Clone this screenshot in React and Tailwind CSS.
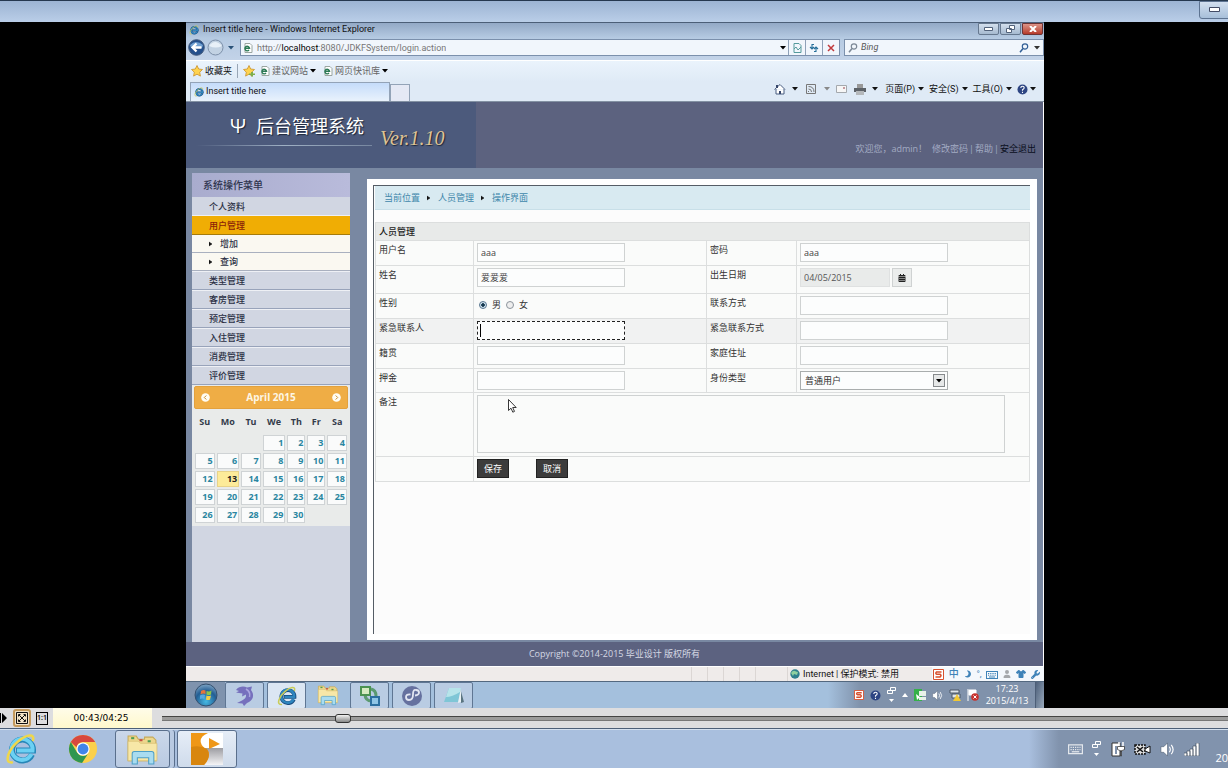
import { FaCalendarAlt } from "react-icons/fa";
import { FaShirt, FaWrench, FaMoon, FaUser } from "react-icons/fa6";

const menu = ["类型管理", "客房管理", "预定管理", "入住管理", "消费管理", "评价管理"];
const weekDays = ["Su", "Mo", "Tu", "We", "Th", "Fr", "Sa"];
const weeks = [
  ["", "", "", 1, 2, 3, 4],
  [5, 6, 7, 8, 9, 10, 11],
  [12, 13, 14, 15, 16, 17, 18],
  [19, 20, 21, 22, 23, 24, 25],
  [26, 27, 28, 29, 30, "", ""],
];

const chromeFont = "font-['Roboto','Noto_Sans_CJK_SC',sans-serif]";
const field = "block h-[19px] border border-[#cfd2d2] bg-[#fcfdfd] px-[3px] text-[9px] text-[#444] outline-none";
const labelCell = "border border-[#dcdede] px-[3px] pt-[3px] align-top text-[9px] leading-[12px] text-[#333]";
const fieldCell = "border border-[#dcdede] px-[3px] py-[2px] align-top";

const Caret = ({ className = "text-black" }) => (
  <svg className={`shrink-0 ${className}`} width="6" height="4" viewBox="0 0 6 4" fill="currentColor">
    <path d="M0 0h6L3 3.5z" />
  </svg>
);

const Triangle = () => (
  <svg width="4" height="6" viewBox="0 0 4 6" className="shrink-0" fill="#111">
    <path d="M0 1l3 2-3 2z" stroke="#111" strokeWidth=".5" />
  </svg>
);

const IeIcon = ({ size = 12, light = false }) => (
  <svg width={size} height={size} viewBox="0 0 32 32" fill="none" className="shrink-0">
    <path
      d="M27 21.500A10.500 10.500 0 1 1 28 17.500H11"
      stroke={light ? "#2787b8" : "#174a7e"}
      strokeWidth="6"
    />
    <path
      d="M26.500 21A10.500 10.500 0 1 1 27.500 17.500H12"
      stroke={light ? "#6bd0f3" : "#2f86bf"}
      strokeWidth="4"
    />
    <path
      d="M7 29.500C-2 30 4 16 13 8.500C21 1.500 30 0 28 7"
      stroke={light ? "#eed74c" : "#c9cc58"}
      strokeWidth="2.500"
      strokeLinecap="round"
    />
  </svg>
);

const PageIcon = () => (
  <svg width="10" height="10" viewBox="0 0 10 10" fill="none" className="shrink-0">
    <path d="M2 .5h5l2 2v7H2z" fill="#fff" stroke="#9aa5a0" />
    <path d="M6 7A2.300 2.300 0 1 1 6.500 5.200H1.500" stroke="#2c7a55" strokeWidth="1.400" />
  </svg>
);

const Star = ({ plus }) => (
  <svg width="12" height="12" viewBox="0 0 12 12" className="shrink-0">
    <path d="M6 .5l1.700 3.500 3.800.5-2.800 2.700.7 3.900L6 9.200l-3.400 1.900.7-3.900L.5 4.500 4.300 4z" fill="#ffd34f" stroke="#c9902a" strokeWidth=".8" />
    {plus && <path d="M6 8.500h2V7h2v1.500h2v1.500h-2v1.500H8V10H6z" fill="#7fae4a" />}
  </svg>
);

const Search = ({ color }) => (
  <svg width="10" height="10" viewBox="0 0 10 10" fill="none" className="shrink-0">
    <circle cx="6" cy="3.500" r="2.700" stroke={color} strokeWidth="1.200" />
    <path d="M4 5.500L1 9.300" stroke={color} strokeWidth="1.500" />
  </svg>
);

const Folder = ({ size }) => (
  <svg width={size} height={size} viewBox="0 0 32 32" className="shrink-0">
    <path d="M2 3h8l2 3h6V4h8l3 3v20H2z" fill="#edd78c" stroke="#c7aa58" />
    <path d="M2 8h10l2 2h16v17H2z" fill="#f7e7a7" stroke="#d3ba6c" strokeWidth=".6" />
    <path d="M5 4h3v2H5z" fill="#4f9d52" />
    <path d="M13 6h3v2h-3z" fill="#c95040" />
    <path d="M21 7h3v2h-3z" fill="#4f9d52" />
    <path d="M6 30V20q0-2 2-2h17q2 0 2 2v10h-5v-6H11v6z" fill="#a9dcf0" stroke="#4d9fc7" />
  </svg>
);

const StartOrb = () => (
  <svg width="24" height="24" viewBox="0 0 24 24">
    <defs>
      <radialGradient id="orb" cx=".5" cy=".8" r=".8">
        <stop offset="0" stopColor="#45b9e3" />
        <stop offset=".6" stopColor="#235d93" />
        <stop offset="1" stopColor="#7fa5c5" />
      </radialGradient>
    </defs>
    <circle cx="12" cy="12" r="11" fill="url(#orb)" stroke="#35506f" />
    <path d="M7 8q2.500-1.500 4.500-.5V11Q9 10 6.500 11.500z" fill="#e8743b" />
    <path d="M12.500 8q2.500 1 5-.5l-.5 4q-2.500 1-4.500 0z" fill="#8ec549" />
    <path d="M6 12.500q2.500-1.500 5-.5l-.5 4q-2.500-1-4.500 0z" fill="#59a8e0" />
    <path d="M12.500 12.500q2 1 4.500 0l-1 4q-2 1-4 0z" fill="#f6cd45" />
  </svg>
);

const Dolphin = () => (
  <svg width="22" height="22" viewBox="0 0 22 22" fill="#7670bd">
    <path d="M2 5C5 1 10 1 13 2.500L18 1.500 17 5C21 10 19 16 13 18L10 21 8.500 18.500 3 18 8 15.500C11 14 12.500 12 12 9.500L8 11.500 8.500 8.500C6 8.500 4 7.500 2 7.500L5 6z" />
    <path d="M12 4q5 3 3.500 8" fill="none" stroke="#aaa6df" strokeWidth="1.500" />
  </svg>
);

const Network = () => (
  <svg width="22" height="22" viewBox="0 0 22 22" fill="none">
    <path d="M6 9q0 7 7 7M12 4q5 1 5 7" stroke="#5b9a70" strokeWidth="3" />
    <path d="M2 2h9v8H2z" fill="#d5eac0" stroke="#4b9251" strokeWidth="2" />
    <path d="M12 12h8v8h-8z" fill="#8fc5e6" stroke="#2c6fa0" strokeWidth="2" />
  </svg>
);

const Infinity = () => (
  <svg width="22" height="22" viewBox="0 0 22 22" fill="none">
    <circle cx="11" cy="11" r="10" fill="#66719f" />
    <path d="M9.500 9.500Q5 9 5 12t3 3q4 0 4-5.500T15 5q3 0 3 2.500t-4 3" stroke="#e3e6f2" strokeWidth="1.800" />
  </svg>
);

const Notebook = () => (
  <svg width="22" height="22" viewBox="0 0 22 22">
    <path d="M17 3l4 14-3 1z" fill="#5a7480" />
    <path d="M6 3h12l-3 14H1z" fill="#7fc6d6" />
    <path d="M6 3h12l-1 4q-8 5-14 5z" fill="#b7e4ea" />
    <path d="M18 3v14l-3 1z" fill="#e9f2f4" />
  </svg>
);

const Chrome = () => (
  <svg width="30" height="30" viewBox="0 0 32 32">
    <circle cx="16" cy="16" r="15" fill="#fbd04b" />
    <path d="M3 8.500A15 15 0 0 1 29 8.500H16A7.500 7.500 0 0 0 9 14z" fill="#d8483e" />
    <path d="M3 8.500A15 15 0 0 0 15 31l6-9.500A7.500 7.500 0 0 1 9.500 19.500z" fill="#2f9650" />
    <circle cx="16" cy="16" r="7" fill="#fff" />
    <circle cx="16" cy="16" r="5.800" fill="#4285e8" />
  </svg>
);

const PlayerLogo = () => (
  <svg width="32" height="32" viewBox="0 0 32 32">
    <defs>
      <linearGradient id="silver" x2="0" y2="1">
        <stop offset="0" stopColor="#9d9da2" />
        <stop offset="1" stopColor="#f4f4f6" />
      </linearGradient>
    </defs>
    <path d="M0 0h32v32H0z" fill="#fff" />
    <path d="M12 15h20v17H12z" fill="url(#silver)" />
    <path d="M0 0h17Q8 4 10 10q1 4 6 6 5 7-3 16H0z" fill="#ef9717" />
    <path d="M0 14q9-2 16 2 5 7-3 16H0z" fill="#d8860f" />
    <path d="M18 5l11 6-11 5z" fill="#ef9717" />
  </svg>
);

const Speaker = ({ size = 12 }) => (
  <svg width={size} height={size} viewBox="0 0 16 16" fill="none" className="shrink-0">
    <path d="M1 5h3l4-4v14l-4-4H1z" fill="#fff" stroke="#4d5c70" strokeWidth=".6" />
    <path d="M10 5q2 3 0 6M12 3q4 5 0 10" stroke="#fff" strokeWidth="1.200" />
  </svg>
);

const Restore = () => (
  <svg width="9" height="16" viewBox="0 0 9 16" fill="none" className="shrink-0">
    <path d="M3.500.500h5v3h-5zM.5 3.500h5v3h-5z" stroke="#fff" fill="#8496ad" />
    <path d="M2 12h5l-2.500 3z" fill="#fff" />
  </svg>
);

const Keyboard = ({ color, width = 12 }) => (
  <svg width={width} height={width * 3 / 4} viewBox="0 0 12 9" fill="none" className="shrink-0">
    <rect x=".5" y="1.500" width="11" height="7" stroke={color} />
    <path d="M2 3.500h8M2 5.200h8" stroke={color} strokeDasharray="1 .8" />
    <path d="M3 7h6" stroke={color} />
  </svg>
);

const SogouIcon = ({ size = 11 }) => (
  <svg width={size} height={size} viewBox="0 0 11 11" fill="none" className="shrink-0">
    <path d="M.5.500h10v10H.5z" fill="#fff" stroke="#d8512f" />
    <path d="M8.500 3H3.500Q2 4.500 4 5.300h3Q9 6.500 7 8H2.500" stroke="#d8512f" strokeWidth="1.600" />
  </svg>
);

const HelpIcon = () => (
  <svg width="11" height="11" viewBox="0 0 11 11" fill="none" className="shrink-0">
    <circle cx="5.500" cy="5.500" r="5" fill="#2d4583" />
    <path d="M3.800 4q0-1.700 1.700-1.700t1.700 1.500q0 1-1.700 2v1M5.500 7.800v1.200" stroke="#fff" strokeWidth="1.100" />
  </svg>
);

const WindowButton = ({ label, close, children }) => (
  <button
    aria-label={label}
    className={`flex h-[12px] w-[21px] items-center justify-center rounded-b-[2px] border ${
      close ? "border-[#6f3434] bg-linear-to-b from-[#dc9488] to-[#b5392a]" : "border-[#66788f] bg-linear-to-b from-[#d3dfed] to-[#a6bad0]"
    }`}
  >
    {children}
  </button>
);

const TitleBar = () => (
  <div className={`flex h-[16px] items-start justify-between border-t border-[#4c5f78] bg-linear-to-b from-[#93a9c6] to-[#b5cae2] pr-px pl-[3px] ${chromeFont}`}>
    <h1 className="flex items-center gap-[4px] text-[9px] leading-[13px] text-[#111]">
      <IeIcon size={10} />
      Insert title here - Windows Internet Explorer
    </h1>
    <div className="flex gap-px">
      <WindowButton label="最小化">
        <svg width="9" height="5"><path d="M.5.500h8v3h-8z" fill="#fff" stroke="#52627a" /></svg>
      </WindowButton>
      <WindowButton label="还原">
        <svg width="9" height="8"><path d="M3.500.500h5v4h-5zM.5 3.500h5v4h-5z" fill="#fff" stroke="#52627a" /></svg>
      </WindowButton>
      <WindowButton label="关闭" close>
        <svg width="8" height="6"><path d="M1 0l6 6M7 0L1 6" stroke="#fff" strokeWidth="2" /></svg>
      </WindowButton>
    </div>
  </div>
);

const AddressBar = () => (
  <div className={`flex h-[22px] items-center bg-linear-to-b from-[#b5cae2] to-[#c3d3e8] pb-[3px] pl-[2px] ${chromeFont}`}>
    <button aria-label="后退">
      <svg width="17" height="17" viewBox="0 0 17 17" fill="none">
        <circle cx="8.500" cy="8.500" r="7.800" fill="#24508c" stroke="#42597c" />
        <path d="M2 6q6-6 13 0l-1 3H3z" fill="#6f9fd0" />
        <path d="M13.500 8.500H5M8.500 4.500l-4 4 4 4" stroke="#fff" strokeWidth="2.300" />
      </svg>
    </button>
    <button aria-label="前进" className="ml-[2px]">
      <svg width="17" height="17" viewBox="0 0 17 17">
        <circle cx="8.500" cy="8.500" r="7.500" fill="#c2d2e3" stroke="#7d90a9" />
        <path d="M2 7q6-8 13 0-6 3-13 0z" fill="#e8f0f8" />
      </svg>
    </button>
    <Caret className="mr-[6px] ml-[4px] text-[#2a5278]" />
    <div className="flex h-[17px] min-w-0 flex-1 items-center border border-[#7b90ac] bg-[#f1f6fc]">
      <div className="flex min-w-0 flex-1 items-center gap-[4px] px-[2px]">
        <PageIcon />
        <span className="truncate text-[9px] leading-[14px] text-[#777]">
          http://<span className="text-black">localhost</span>:8080/JDKFSystem/login.action
        </span>
        <Caret className="ml-auto text-black" />
      </div>
      <button aria-label="兼容性视图" className="flex h-full w-[17px] items-center justify-center border-l border-[#8fa1b8]">
        <svg width="9" height="10" fill="none"><path d="M1 .5h5l2 2v7H1zM1 6l2-2 2 3 3-3" stroke="#559a9c" /></svg>
      </button>
      <button aria-label="刷新" className="flex h-full w-[17px] items-center justify-center border-l border-[#8fa1b8]">
        <svg width="10" height="10" fill="none"><path d="M5 1.500H3V6M1 4l2 2 2-2M5 8.500h2V4M5 6l2-2 2 2" stroke="#256f9a" strokeWidth="1.100" /></svg>
      </button>
      <button aria-label="停止" className="flex h-full w-[17px] items-center justify-center border-l border-[#8fa1b8]">
        <svg width="8" height="8"><path d="M1 1l6 6M7 1L1 7" stroke="#c0393b" strokeWidth="1.500" /></svg>
      </button>
    </div>
    <label className="ml-[4px] flex h-[17px] w-[200px] items-center border border-[#7b90ac] bg-[#f1f6fc] px-[3px]">
      <Search color="#7c8896" />
      <input aria-label="搜索" placeholder="Bing" className="ml-[3px] min-w-0 flex-1 text-[9px] italic outline-none placeholder:text-[#555]" />
      <Search color="#315f96" />
      <Caret className="ml-[5px] text-[#333]" />
    </label>
  </div>
);

const FavoritesBar = () => (
  <nav className="flex h-[22px] items-center border-t border-white bg-linear-to-b from-[#eaf3fc] to-[#dfeaf6] pb-[2px] pl-[5px] text-[9px] text-[#666]">
    <Star />
    <a href="#fav" className="ml-[2px] text-[#111]">收藏夹</a>
    <span className="mx-[5px] h-[14px] w-px bg-[#98a6b6]"></span>
    <Star plus />
    <a href="#sites" className="ml-[5px] flex items-center gap-[2px]"><PageIcon />建议网站<Caret /></a>
    <a href="#slices" className="ml-[7px] flex items-center gap-[2px]"><PageIcon />网页快讯库<Caret /></a>
  </nav>
);

const TabRow = () => (
  <div className={`flex h-[20px] items-end border-b border-[#8391a3] bg-[#dfeaf6] pl-[4px] text-[9px] text-[#111] ${chromeFont}`}>
    <div className="flex h-[19px] w-[200px] items-center gap-[2px] border border-b-0 border-[#93a3b7] bg-linear-to-b from-[#c5dcfa] to-[#e9f2fc] px-[3px]">
      <IeIcon size={10} />
      Insert title here
    </div>
    <button aria-label="新选项卡" className="h-[17px] w-[20px] border border-b-0 border-[#93a3b7] bg-[#e5e9f5]"></button>
    <div className="mb-[6px] ml-auto flex items-center pr-[8px] leading-[12px]">
      <svg width="12" height="12" fill="none"><path d="M2 6v5h8V6M.5 6.500L6 1.500l5 5" fill="#fff" stroke="#485c80" /><path d="M5 8h2v3H5zM2 2h2v3H2z" fill="#36466b" /></svg>
      <Caret className="ml-[6px]" />
      <svg width="10" height="10" fill="none" className="ml-[8px]"><path d="M.5.500h9v9h-9z" stroke="#777" /><path d="M2.500 8V7M2.500 5q3 0 3 3M2.500 2.500q5.500 0 5.500 5.500" stroke="#777" /></svg>
      <Caret className="ml-[8px] text-[#888]" />
      <svg width="11" height="9" fill="none" className="ml-[6px]"><path d="M.5.500h10v7H.5z" fill="#f6f6f6" stroke="#a4a8ad" /><path d="M7 2h2v2H7z" fill="#c69aa0" /></svg>
      <svg width="12" height="11" className="ml-[7px]"><path d="M3 0h6v4H3z" fill="#999" /><path d="M0 4h12v4H0z" fill="#5d6268" /><path d="M2 7h8v4H2z" fill="#b5b8bb" /></svg>
      <Caret className="mr-[7px] ml-[6px]" />
      <span>页面(P)</span><Caret className="mr-[5px] ml-[3px]" />
      <span>安全(S)</span><Caret className="mr-[5px] ml-[3px]" />
      <span>工具(O)</span><Caret className="mr-[5px] ml-[3px]" />
      <HelpIcon />
      <Caret className="ml-[2px]" />
    </div>
  </div>
);

const Header = () => (
  <header className="flex h-[66px] bg-[#5c627f]">
    <div className="w-[290px] bg-[#4c5a7c] pl-[10px]">
      <div className="flex items-end">
        <div className="w-[176px] pl-[34px]">
          <div className="flex h-[43px] items-center gap-[10px] pt-[5px] text-[18px] leading-[24px] whitespace-nowrap text-white text-shadow-[1px_1px_1px_#1d2638]">
            <span className="text-[20px]">Ψ</span>
            后台管理系统
          </div>
        </div>
        <span className="pl-[8px] font-['Liberation_Serif',serif] text-[20px] leading-[14px] text-[#dfc394] italic text-shadow-[1px_1px_1px_#1d2638]">Ver.1.10</span>
      </div>
      <div className="h-px w-[176px] bg-linear-to-r from-transparent via-[#9fb0c4] to-[#7787a0]"></div>
    </div>
    <div className="ml-auto flex items-start gap-px pt-[40px] pr-[7px] text-[9px] leading-[14px] text-[#a3abc3]">
      <span className="mr-[4px]">欢迎您，admin！</span>
      <a href="#password">修改密码</a>|<a href="#help">帮助</a>|
      <a href="#logout" className="text-[#0a0e1c]">安全退出</a>
    </div>
  </header>
);

const Calendar = () => (
  <div className="bg-[#e9ebea] px-[2px] pt-px pb-[2px]">
    <div className="flex h-[23px] items-center justify-between rounded-[2px] border border-[#e3a13d] bg-[#efad45] px-[6px] text-[10px] font-bold text-[#fdf6e4]">
      <button aria-label="Prev">
        <svg width="9" height="9" fill="none"><circle cx="4.500" cy="4.500" r="4.300" fill="#fffdf4" /><path d="M5.300 2.500l-2 2 2 2" stroke="#c98c2c" /></svg>
      </button>
      April 2015
      <button aria-label="Next">
        <svg width="9" height="9" fill="none"><circle cx="4.500" cy="4.500" r="4.300" fill="#fffdf4" /><path d="M3.700 2.500l2 2-2 2" stroke="#c98c2c" /></svg>
      </button>
    </div>
    <table className="w-full table-fixed border-collapse text-[9px]">
      <colgroup>
        <col className="w-[14%]" />
        <col className="w-[16%]" />
        <col className="w-[14%]" />
        <col className="w-[16%]" />
        <col className="w-[13%]" />
        <col className="w-[13%]" />
        <col className="w-[14%]" />
      </colgroup>
      <thead>
        <tr className="h-[25px]">
          {weekDays.map((d) => <th key={d} className="font-bold text-[#333b4a]">{d}</th>)}
        </tr>
      </thead>
      <tbody>
        {weeks.map((week, i) => (
          <tr key={i} className="h-[18px]">
            {week.map((day, j) => (
              <td key={j} className="p-px">
                {day && (
                  <a
                    href="#day"
                    className={`block h-[16px] border pr-px text-right leading-[14px] font-bold ${
                      day === 13 ? "border-[#e8d38a] bg-[#fdeb99] text-[#222]" : "border-[#cfd3d5] bg-[#fafbfb] text-[#2a86a0]"
                    }`}
                  >
                    {day}
                  </a>
                )}
              </td>
            ))}
          </tr>
        ))}
      </tbody>
    </table>
  </div>
);

const Sidebar = () => (
  <aside className="w-[158px] shrink-0 bg-[#d1d6e2]">
    <h2 className="h-[24px] bg-linear-to-r from-[#a9acce] to-[#b9bbdb] pl-[11px] text-[10px] leading-[24px] font-medium text-[#30364f]">系统操作菜单</h2>
    <ul className="text-[9px] font-medium text-[#2c3145]">
      <li className="h-[19px] border-b border-[#eef0f5] pl-[17px] leading-[19px]"><a href="#profile">个人资料</a></li>
      <li className="h-[19px] border-b border-[#a67b0a] bg-[#f0ad04] pl-[17px] leading-[19px] text-[#8b1d08]"><a href="#users">用户管理</a></li>
      {["增加", "查询"].map((t) => (
        <li key={t} className="flex h-[18px] items-center gap-[7px] border-b border-[#a9b0bf] bg-[#faf8f1] pl-[17px]">
          <Triangle />
          <a href="#sub">{t}</a>
        </li>
      ))}
      {menu.map((t) => (
        <li key={t} className="h-[19px] border-t border-b border-t-[#eef0f5] border-b-[#98a3ba] pl-[17px] leading-[17px]"><a href="#menu">{t}</a></li>
      ))}
    </ul>
    <Calendar />
  </aside>
);

const Row = ({ id, label, id2, label2, children, right, height = "h-[25px]", active }) => (
  <tr className={`${height} ${active ? "bg-[#f1f2f2]" : ""}`}>
    <td className={labelCell}><label htmlFor={id}>{label}</label></td>
    <td className={fieldCell}>{children || <input id={id} className={`${field} w-[148px]`} />}</td>
    <td className={labelCell}><label htmlFor={id2}>{label2}</label></td>
    <td className={fieldCell}>{right || <input id={id2} className={`${field} w-[148px]`} />}</td>
  </tr>
);

const radio = "size-[8px] appearance-none rounded-full border border-[#8c949c] bg-[#eee] checked:border-[#5c7890] checked:bg-[radial-gradient(#16384f_35%,#cfe2ee_50%)]";

const UserForm = () => (
  <table className="mt-[12px] w-full table-fixed border-collapse border border-[#dcdede] bg-[#fafbfa]">
    <colgroup>
      <col className="w-[15%]" />
      <col />
      <col className="w-[90px]" />
      <col className="w-[233px]" />
    </colgroup>
    <thead>
      <tr className="h-[18px] bg-[#e8eae9]">
        <th colSpan={4} className="px-[3px] text-left text-[9px] leading-[16px] font-medium text-[#222]">人员管理</th>
      </tr>
    </thead>
    <tbody>
      <Row id="user" label="用户名" id2="pwd" label2="密码" right={<input id="pwd" defaultValue="aaa" className={`${field} w-[148px]`} />}>
        <input id="user" defaultValue="aaa" className={`${field} w-[148px]`} />
      </Row>
      <Row
        id="name"
        label="姓名"
        id2="birth"
        label2="出生日期"
        height="h-[28px]"
        right={
          <div className="flex gap-[2px]">
            <input id="birth" defaultValue="04/05/2015" readOnly className="h-[19px] w-[90px] border border-[#dfe1e1] bg-[#e9ebea] px-[3px] text-[9px] text-[#555] outline-none" />
            <button aria-label="选择日期" className="flex h-[19px] w-[20px] items-center justify-center border border-[#cfd2d2] bg-[#ebedec]">
              <FaCalendarAlt className="size-[8px] text-[#222]" />
            </button>
          </div>
        }
      >
        <input id="name" defaultValue="爱爱爱" className={`${field} w-[148px]`} />
      </Row>
      <Row id="male" label="性别" id2="phone" label2="联系方式">
        <div className="flex h-[17px] items-center gap-[5px] pl-[2px] text-[9px] text-[#333]">
          <input id="male" type="radio" name="sex" defaultChecked className={radio} />
          <label htmlFor="male">男</label>
          <input id="female" type="radio" name="sex" className={radio} />
          <label htmlFor="female">女</label>
        </div>
      </Row>
      <Row id="contact" label="紧急联系人" id2="contactPhone" label2="紧急联系方式" active>
        <div className="relative">
          <input id="contact" className="block h-[19px] w-[148px] border border-dashed border-[#222] bg-[#fcfdfd] px-[3px] text-[9px] outline-none" />
          <span className="absolute top-[3px] left-[3px] h-[13px] w-px bg-black"></span>
        </div>
      </Row>
      <Row id="origin" label="籍贯" id2="address" label2="家庭住址" />
      <Row
        id="deposit"
        label="押金"
        id2="role"
        label2="身份类型"
        height="h-[24px]"
        right={
          <div className="relative w-[148px]">
            <select id="role" className="block h-[19px] w-full appearance-none border border-[#a9adad] bg-[#fcfdfd] px-[4px] text-[9px] text-[#333]">
              <option>普通用户</option>
            </select>
            <span className="pointer-events-none absolute top-[3px] right-[3px] flex h-[13px] w-[12px] items-center justify-center border border-[#868a8c] bg-[#e6e8e8]">
              <Caret />
            </span>
          </div>
        }
      />
      <tr className="h-[64px]">
        <td className={labelCell}><label htmlFor="remark">备注</label></td>
        <td colSpan={3} className={fieldCell}>
          <div className="relative mr-[21px]">
            <textarea id="remark" className="block h-[58px] w-full resize-none border border-[#cfd2d2] bg-[#fafbfa] px-[3px] text-[9px] outline-none"></textarea>
            <svg className="absolute top-[4px] left-[31px]" width="9" height="14" viewBox="0 0 9 14">
              <path d="M.5.500v11l2.500-2.300 1.800 4 1.700-.8-1.800-3.900h3.500z" fill="#fff" stroke="#222" strokeWidth=".9" />
            </svg>
          </div>
        </td>
      </tr>
      <tr className="h-[25px]">
        <td className={labelCell}></td>
        <td colSpan={3} className={fieldCell}>
          <div className="flex gap-[27px] text-[9px] text-white">
            <button className="h-[19px] w-[32px] border border-[#222] bg-[#3c3c3c]">保存</button>
            <button className="h-[19px] w-[32px] border border-[#222] bg-[#3c3c3c]">取消</button>
          </div>
        </td>
      </tr>
    </tbody>
  </table>
);

const StatusBar = () => (
  <div className={`flex h-[15px] items-stretch justify-end border-t border-white bg-[#efebea] text-[9px] leading-[14px] text-[#111] ${chromeFont}`}>
    {[1, 2, 3, 4, 5].map((n) => <span key={n} className="w-[16px] border-l border-[#dbd6d4]"></span>)}
    <div className="ml-[16px] flex w-[145px] items-center gap-[3px] border-l border-[#dbd6d4] pl-[2px]">
      <svg width="10" height="10" fill="none" className="shrink-0"><circle cx="5" cy="5" r="4.700" fill="#2f7f8e" /><path d="M1 4q2-3 4-2t3 1l-1 3-3-1-1 2z" fill="#8fd0a0" /></svg>
      <span className="whitespace-nowrap">Internet | 保护模式: 禁用</span>
    </div>
    <div className="flex w-[112px] items-center justify-between bg-[#f4f8fc] pr-[4px] pl-px text-[#3f83b8]">
      <SogouIcon />
      <span className="text-[10px] font-medium">中</span>
      <FaMoon className="size-[8px] -scale-x-100" />
      <span>°,</span>
      <Keyboard color="#3f83b8" />
      <FaUser className="size-[8px] text-[#a5a8ab]" />
      <FaShirt className="size-[10px]" />
      <FaWrench className="size-[9px]" />
    </div>
  </div>
);

const taskButton = "flex h-[27px] w-[39px] items-center justify-center rounded-[2px] border border-[#5f7693]";

const InnerTaskbar = () => (
  <div className="flex h-[27px] border-t border-[#53687f] bg-[#a4c0dd]">
    <div className="flex w-[39px] items-center justify-center bg-[#7f93ae]"><button aria-label="开始"><StartOrb /></button></div>
    <div className="flex gap-[3px]">
      <button aria-label="MySQL" className={`${taskButton} bg-[#b9cce3]`}><Dolphin /></button>
      <button aria-label="Internet Explorer" className={`${taskButton} bg-[#dbe6f3]`}><IeIcon size={20} /></button>
      <button aria-label="资源管理器" className="flex w-[38px] items-center justify-center"><Folder size={22} /></button>
      <button aria-label="VMware" className={`${taskButton} bg-[#b9cce3]`}><Network /></button>
      <button aria-label="MyEclipse" className={`${taskButton} bg-[#b9cce3]`}><Infinity /></button>
      <button aria-label="记事本" className={`${taskButton} bg-[#b9cce3]`}><Notebook /></button>
    </div>
    <div className="ml-auto flex items-center gap-[6px] bg-linear-to-r from-[#a4c0dd] to-[#8092ab] to-15% pl-[26px] text-[9px] leading-[12px] text-white">
      <SogouIcon size={10} />
      <HelpIcon />
      <Restore />
      <svg width="6" height="4"><path d="M0 4l3-4 3 4z" fill="#fff" /></svg>
      <svg width="12" height="12"><path d="M0 0h8v12H0z" fill="#35b04a" /><path d="M5 2h7v5H5zM5 8h7v3H5z" fill="#e8f2e8" /><path d="M2 5l4 3-3 3z" fill="#fff" /></svg>
      <Speaker size={11} />
      <svg width="12" height="12"><path d="M1 1h9v3H1zM3 5h8v4H3z" fill="#dfe5ea" stroke="#4b5664" /><path d="M8 5l4 7H4z" fill="#f2c832" /></svg>
      <svg width="12" height="12"><path d="M1 0v12M2 1h7v5H2z" fill="#fff" stroke="#fff" /><circle cx="8" cy="8" r="3.800" fill="#c8332f" /><path d="M6.500 6.500l3 3M9.500 6.500l-3 3" stroke="#fff" /></svg>
      <div className="w-[44px] text-center">
        <div>17:23</div>
        <div>2015/4/13</div>
      </div>
      <span className="h-full w-[9px] border-l border-[#4c5e77] bg-linear-to-br from-[#4e617b] to-[#9aaabd]"></span>
    </div>
  </div>
);

const PlayerBar = () => (
  <div className="flex h-[21px] items-center overflow-hidden border-b border-[#4c5f78] bg-[#dddddf] text-[9px] text-black">
    <button aria-label="播放"><svg width="7" height="10"><path d="M0 0h1v10H0zM2 0l5 5-5 5z" /></svg></button>
    <button aria-label="全屏" className="ml-[6px] flex size-[18px] items-center justify-center rounded-[3px] border-2 border-[#c49a5c] bg-[#f2e4c8]">
      <svg width="12" height="12" fill="none"><path d="M.5.500h11v11H.5z" stroke="#111" /><path d="M2.500 4.500v-2h2M7.500 2.500h2v2M9.500 7.500v2h-2M4.500 9.500h-2v-2M3 3l6 6M9 3L3 9" stroke="#111" /></svg>
    </button>
    <button aria-label="原始大小" className="ml-[5px] flex h-[13px] w-[12px] items-center justify-center border border-black text-[7px] font-semibold">1:1</button>
    <div className="ml-[5px] h-full w-[99px] bg-linear-to-b from-[#fffce9] to-[#fff8cc] pr-[3px] text-center font-['DejaVu_Sans',sans-serif] leading-[20px]">00:43/04:25</div>
    <input
      type="range"
      aria-label="进度"
      max="265"
      defaultValue="43"
      className="-mr-[16px] ml-[10px] h-[5px] min-w-0 flex-1 appearance-none border-t border-b border-t-[#444] border-b-[#777] bg-[#9b9b9b] [&::-webkit-slider-thumb]:h-[9px] [&::-webkit-slider-thumb]:w-[16px] [&::-webkit-slider-thumb]:appearance-none [&::-webkit-slider-thumb]:rounded-[3px] [&::-webkit-slider-thumb]:border [&::-webkit-slider-thumb]:border-[#333] [&::-webkit-slider-thumb]:bg-linear-to-b [&::-webkit-slider-thumb]:from-[#f2f2f2] [&::-webkit-slider-thumb]:to-[#888]"
    />
  </div>
);

const OuterTaskbar = () => (
  <div className="flex h-[39px] overflow-hidden border-t border-[#d5e1f0] bg-[#a9bfde]">
    <div className="flex items-center pl-[5px]">
      <button aria-label="Internet Explorer" className="w-[63px]"><IeIcon size={32} light /></button>
      <button aria-label="Chrome" className="w-[47px]"><Chrome /></button>
      <button aria-label="资源管理器" className="flex h-full w-[55px] items-center justify-center rounded-[3px] border border-[#5a6f8c] bg-linear-to-b from-[#cbd8ea] to-[#b9cae2]"><Folder size={33} /></button>
      <span className="h-full w-[5px] rounded-r-[3px] border-r border-[#5a6f8c] bg-[#b9cae2]"></span>
      <button aria-label="播放器" className="ml-[2px] flex h-full w-[60px] items-center justify-center rounded-[3px] border border-[#5a6f8c] bg-linear-to-b from-[#e6edf7] to-[#cfdbeb]"><PlayerLogo /></button>
    </div>
    <div className="ml-auto flex items-center gap-[9px] bg-linear-to-r from-[#a9bfde] to-[#8193ad] to-15% pl-[39px] text-white">
      <Keyboard color="#e3e7ec" width={15} />
      <Restore />
      <svg width="15" height="16" fill="none"><path d="M2 2h8v13H2z" fill="#fff" stroke="#333" /><path d="M5 5h2v8H5z" fill="#8193ad" /><path d="M9 1v5M13 1v5" stroke="#fff" strokeWidth="1.500" /><path d="M7.500 5.500h7v3q-3.500 3-7 0zM10.500 10h1v5h-1z" fill="#fff" stroke="#222" strokeWidth=".7" /></svg>
      <svg width="17" height="13" fill="none"><path d="M1 2h10v9H1z" fill="#ddd" stroke="#111" strokeWidth="1.500" strokeDasharray="2 1" /><path d="M11 6l5-3v7l-5-2z" fill="#fff" stroke="#111" /><path d="M3 4l6 5M9 4L3 9" stroke="#111" strokeWidth="1.500" /></svg>
      <Speaker size={15} />
      <svg width="16" height="13"><path d="M0 10h3v3H0zM3 8h3v5H3zM6 6h3v7H6zM9 3h3v10H9zM12 0h3v13h-3z" fill="#fff" stroke="#3b4858" strokeWidth=".6" /></svg>
      <span className="ml-[6px] self-end text-[11px] leading-[21px]">20</span>
    </div>
  </div>
);

export default function App() {
  return (
    <div className="flex min-h-screen flex-col overflow-hidden bg-black font-['Open_Sans','Noto_Sans_CJK_SC',sans-serif]">
      <div className="flex h-[22px] items-start justify-end border-t border-[#25384f] bg-linear-to-b from-[#9cb4d3] to-[#bacee8]">
        <button aria-label="最小化" className="-mr-px flex h-[18px] w-[30px] items-center justify-center rounded-bl-[3px] border border-[#5d7391] bg-linear-to-b from-[#d2dfef] to-[#a7bfd9]">
          <svg width="11" height="6"><path d="M.5.500h10v4H.5z" fill="#fff" stroke="#434c66" /></svg>
        </button>
      </div>
      <main className="grid flex-1 grid-cols-[186fr_858fr_184fr]">
        <div></div>
        <div className="flex min-w-0 flex-col">
          <TitleBar />
          <AddressBar />
          <FavoritesBar />
          <TabRow />
          <div className="flex flex-1 flex-col border-r border-r-white bg-[#7988a2]">
            <Header />
            <div className="flex flex-1 gap-[17px] pr-[6px] pl-[6px]">
              <div className="flex pt-[5px]"><Sidebar /></div>
              <div className="mt-[11px] mb-[2px] min-w-0 flex-1 bg-white py-[6px] pr-[7px] pl-[6px]">
                <div className="h-full border-t border-l border-t-[#555d66] border-l-[#555d66] bg-[#fcfcfc] pl-px">
                  <nav className="flex h-[24px] items-center gap-[7px] border-b border-[#c8dfe8] bg-[#d8eaf1] pl-[9px] text-[9px] text-[#3f87ab]">
                    <a href="#position">当前位置</a>
                    <Triangle />
                    <a href="#people">人员管理</a>
                    <Triangle />
                    <a href="#operate">操作界面</a>
                  </nav>
                  <UserForm />
                </div>
              </div>
            </div>
            <footer className="h-[24px] bg-[#5c6280] text-center text-[9px] leading-[24px] text-[#d5d8e4]">Copyright ©2014-2015 毕业设计 版权所有</footer>
          </div>
          <StatusBar />
          <InnerTaskbar />
        </div>
        <div></div>
      </main>
      <PlayerBar />
      <OuterTaskbar />
    </div>
  );
}
